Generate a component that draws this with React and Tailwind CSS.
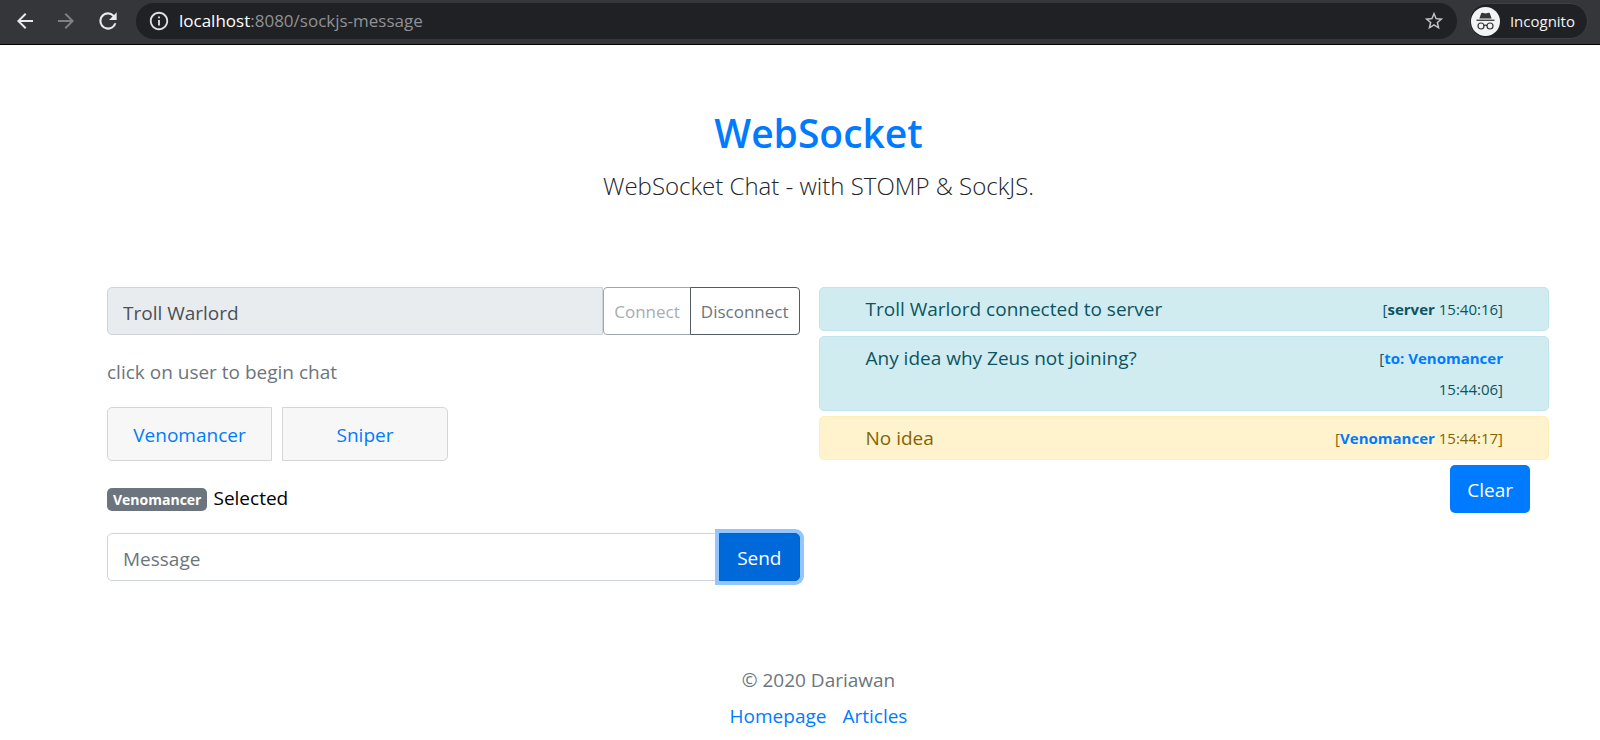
import React from "react";

const messages = [
  {
    text: "Troll Warlord connected to server",
    from: "server",
    time: "15:40:16",
    type: "info",
  },
  {
    text: "Any idea why Zeus not joining?",
    from: "to: Venomancer",
    time: "15:44:06",
    type: "info",
    link: true,
  },
  {
    text: "No idea",
    from: "Venomancer",
    time: "15:44:17",
    type: "warning",
    link: true,
  },
];

function BrowserBar() {
  return (
    <header className="flex h-[45px] items-start border-b border-black bg-[#35363a] pt-[3px] pr-3 pl-[13px] font-['Open_Sans','Noto_Sans',sans-serif]">
      <div className="flex h-9 items-center gap-[17px]">
        <button type="button" aria-label="Back" className="text-[#e8eaed]">
          <svg width="24" height="24" viewBox="0 0 24 24" fill="currentColor">
            <path d="M20 11H7.83l5.59-5.59L12 4l-8 8 8 8 1.41-1.41L7.83 13H20v-2z" />
          </svg>
        </button>
        <button type="button" aria-label="Forward" className="text-[#7f8084]">
          <svg width="24" height="24" viewBox="0 0 24 24" fill="currentColor">
            <path d="M12 4l-1.41 1.41L16.17 11H4v2h12.17l-5.58 5.59L12 20l8-8-8-8z" />
          </svg>
        </button>
        <button type="button" aria-label="Reload" className="text-[#e8eaed]">
          <svg width="26" height="26" viewBox="0 0 24 24" fill="currentColor">
            <path d="M17.65 6.35A7.958 7.958 0 0 0 12 4a8 8 0 1 0 7.73 10h-2.08A5.99 5.99 0 0 1 12 18c-3.31 0-6-2.69-6-6s2.69-6 6-6c1.66 0 3.14.69 4.22 1.78L13 11h7V4l-2.35 2.35z" />
          </svg>
        </button>
      </div>
      <div className="ml-[15px] flex h-9 flex-1 items-center rounded-full bg-[#202124] pr-3 pl-3">
        <svg
          width="22"
          height="22"
          viewBox="0 0 24 24"
          fill="#dfe1e5"
          aria-hidden="true"
        >
          <path d="M11 17h2v-6h-2v6zm1-15C6.48 2 2 6.48 2 12s4.48 10 10 10 10-4.48 10-10S17.52 2 12 2zm0 18c-4.41 0-8-3.59-8-8s3.59-8 8-8 8 3.59 8 8-3.59 8-8 8zM11 9h2V7h-2v2z" />
        </svg>
        <p className="ml-[9px] flex-1 text-[17px] text-[#8f9195]">
          <span className="font-medium text-white">localhost</span>
          :8080/sockjs-message
        </p>
        <button type="button" aria-label="Bookmark" className="text-[#c3c4c7]">
          <svg width="22" height="22" viewBox="0 0 24 24" fill="currentColor">
            <path d="M22 9.24l-7.19-.62L12 2 9.19 8.63 2 9.24l5.46 4.73L5.82 21 12 17.27 18.18 21l-1.63-7.03L22 9.24zM12 15.4l-3.76 2.27 1-4.28-3.32-2.88 4.38-.38L12 6.1l1.71 4.04 4.38.38-3.32 2.88 1 4.28L12 15.4z" />
          </svg>
        </button>
      </div>
      <div className="ml-3 flex h-9 items-center gap-[10px] rounded-full border border-[#3f4044] bg-[#202124] pr-3 pl-px text-[15px] text-[#f1f3f4]">
        <svg width="29" height="29" viewBox="0 0 29 29" aria-hidden="true">
          <circle cx="14.5" cy="14.5" r="14.5" fill="#f1f3f4" />
          <path
            d="M10.2 6.3c.2-.5.6-.7 1.1-.6l3.2.7 3.2-.7c.5-.1.9.1 1.1.6l1.8 5.2H8.4z"
            fill="#35363a"
          />
          <path d="M5.5 12.6h18v1.3h-18z" fill="#35363a" />
          <g fill="none" stroke="#35363a" strokeWidth="1.2">
            <circle cx="10" cy="19" r="3" />
            <circle cx="19" cy="19" r="3" />
            <path d="M13 18.8c.9-.7 2.1-.7 3 0" />
          </g>
        </svg>
        <span>Incognito</span>
      </div>
    </header>
  );
}

function Message({ item }) {
  return (
    <div
      className={
        item.type === "warning"
          ? "flex items-start justify-between rounded-[5px] border border-[#ffeeba] bg-[#fff3cd] pt-[6px] pr-[45px] pb-[5px] pl-[46px] text-[#856404]"
          : "flex items-start justify-between rounded-[5px] border border-[#bee5eb] bg-[#d1ecf1] pt-[6px] pr-[45px] pb-[5px] pl-[46px] text-[#0c5460]"
      }
    >
      <p className="leading-[31px]">{item.text}</p>
      <p className="w-[180px] text-right text-[15px] leading-[31px]">
        [
        {item.link ? (
          <a href="#chat" className="font-bold text-[#007bff]">
            {item.from}
          </a>
        ) : (
          <strong className="font-bold">{item.from}</strong>
        )}{" "}
        {item.time}]
      </p>
    </div>
  );
}

function App() {
  return (
    <div className="bg-white text-[#212529]">
      <BrowserBar />
      <div className="pr-[51px] pl-[88px] font-['Open_Sans','Noto_Sans',sans-serif] text-[19px]">
        <div className="pt-[61px] text-center">
          <h1 className="text-[39px] leading-[54px] font-semibold text-[#007bff]">
            WebSocket
          </h1>
          <p className="mt-[7px] text-2xl leading-[38px] font-light">
            WebSocket Chat - with STOMP &amp; SockJS.
          </p>
        </div>

        <main className="mt-[82px] flex items-start">
          <div className="w-1/2 px-[19px]">
            <div className="flex">
              <input
                type="text"
                aria-label="Username"
                defaultValue="Troll Warlord"
                disabled
                className="h-12 min-w-0 flex-1 rounded-l-[5px] border border-[#ced4da] bg-[#e9ecef] px-[15px] pt-[3px] text-[#495057]"
              />
              <button
                type="button"
                disabled
                className="h-12 rounded-l-[4px] border border-[#a0a5aa] px-[10px] pt-[2px] text-[17px] text-[#a7acb1]"
              >
                Connect
              </button>
              <button
                type="button"
                className="-ml-px h-12 rounded-r-[4px] border border-[#545b62] px-[10px] pt-[2px] text-[17px] text-[#6c757d]"
              >
                Disconnect
              </button>
            </div>

            <p className="mt-[22px] leading-[31px] text-[#6c757d]">
              click on user to begin chat
            </p>
            <div className="mt-[19px] flex gap-[10px]">
              <button
                type="button"
                className="h-[54px] w-[165px] rounded-l-[5px] border border-[#d5d5d5] bg-[#f7f7f7] pt-[3px] text-[#007bff]"
              >
                Venomancer
              </button>
              <button
                type="button"
                className="h-[54px] w-[166px] rounded-r-[5px] border border-[#d5d5d5] bg-[#f7f7f7] pt-[3px] text-[#007bff]"
              >
                Sniper
              </button>
            </div>

            <p className="mt-[22px] flex items-baseline gap-[6px] leading-[31px] text-black">
              <span className="rounded-[5px] bg-[#6c757d] px-[6px] text-sm leading-[23px] font-bold text-white">
                Venomancer
              </span>
              Selected
            </p>

            <form
              className="mt-[19px] flex"
              onSubmit={(e) => e.preventDefault()}
            >
              <input
                type="text"
                aria-label="Message"
                placeholder="Message"
                className="h-12 min-w-0 flex-1 rounded-l-[5px] border border-[#ced4da] px-[15px] pt-[3px] placeholder:text-[#6c757d]"
              />
              <button
                type="submit"
                className="h-12 rounded-r-[5px] border border-[#0062cc] bg-[#0069d9] px-[17px] pt-[3px] text-white ring-4 ring-[#93c5ff]"
              >
                Send
              </button>
            </form>
          </div>

          <div className="flex w-1/2 flex-col gap-[5px]">
            {messages.map((item) => (
              <Message key={item.time} item={item} />
            ))}
            <button
              type="button"
              className="mr-[19px] h-12 self-end rounded-[5px] bg-[#007bff] px-[17px] pt-[3px] text-white"
            >
              Clear
            </button>
          </div>
        </main>

        <footer className="mt-[84px] text-center leading-[31px] text-[#6c757d]">
          <p>© 2020 Dariawan</p>
          <nav className="mt-[5px] flex justify-center gap-4 text-[#007bff]">
            <a href="#home">Homepage</a>
            <a href="#articles">Articles</a>
          </nav>
        </footer>
      </div>
    </div>
  );
}

export default App;
